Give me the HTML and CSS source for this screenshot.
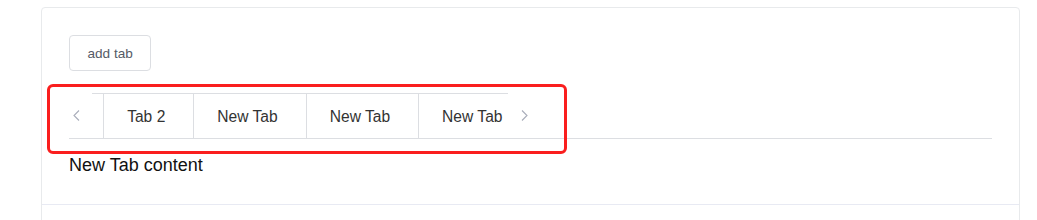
FILE: index.html
```html
<!DOCTYPE html>
<html>
<head>
    <title>Tabs</title>
    <link rel="stylesheet" href="styles.css">
</head>
<body>
<div class="page">
    <div class="card">
        <div class="card-body">
            <button class="btn">add tab</button>

            <div class="tabs-bar">
                <span class="tabs-prev">
                    <svg width="7" height="11" viewBox="0 0 7 11"><polyline points="6,0.5 1,5.5 6,10.5" fill="none" stroke="#a9adba" stroke-width="1.1"/></svg>
                </span>
                <div class="tabs-scroll">
                    <div class="tabs-list">
                        <div class="tab">Tab 1</div>
                        <div class="tab">Tab 2</div>
                        <div class="tab">New Tab</div>
                        <div class="tab">New Tab</div>
                        <div class="tab active">New Tab</div>
                    </div>
                </div>
                <span class="tabs-next">
                    <svg width="7" height="11" viewBox="0 0 7 11"><polyline points="1,0.5 6,5.5 1,10.5" fill="none" stroke="#a9adba" stroke-width="1.1"/></svg>
                </span>
            </div>

            <div class="tab-pane">New Tab content</div>
        </div>
        <div class="card-foot"></div>

        <!-- highlight drawn over the tab bar -->
        <div class="mark"></div>
    </div>
</div>
</body>
</html>
```

FILE: styles.css
```css
/* page */
body {
    margin: 0;
    background: #fff;
    font-family: "Liberation Sans", Arial, sans-serif;
}

.page {
    padding: 7px 17px 0 41px;
}

.card {
    position: relative;
    border: 1px solid #e8eaec;
    border-radius: 4px;
}

.card-body {
    padding: 27px 27px 29px;
}

.card-foot {
    border-top: 1px solid #e8eaf3;
    height: 40px;
}

/* button */
.btn {
    display: block;
    height: 36px;
    padding: 0 17.5px;
    border: 1px solid #dcdee2;
    border-radius: 4px;
    background: #fff;
    color: #555b66;
    font-family: inherit;
    font-size: 13.6px;
    cursor: pointer;
}

/* tabs */
.tabs-bar {
    display: flex;
    margin-top: 22px;
    margin-bottom: 17px;
    border-bottom: 1px solid #dcdee2;
}

.tabs-prev,
.tabs-next {
    display: flex;
    align-items: center;
    height: 45px;
    cursor: pointer;
}

.tabs-prev {
    width: 23px;
    padding-left: 4px;
    box-sizing: border-box;
}

.tabs-next {
    padding-left: 13px;
}

.tabs-scroll {
    width: 416px;
    overflow: hidden;
}

.tabs-list {
    display: flex;
    margin-left: -79px;
}

.tab {
    flex: none;
    height: 44px;
    line-height: 46px;
    padding: 0 28px 0 23px;
    border-top: 1px solid #dcdee2;
    border-left: 1px solid #dcdee2;
    color: #333;
    font-size: 15.6px;
    white-space: nowrap;
    cursor: pointer;
}

.tab-pane {
    font-size: 18px;
    line-height: 19px;
    color: #111;
}

/* red highlight */
.mark {
    position: absolute;
    left: 5px;
    top: 76px;
    width: 520px;
    height: 70px;
    box-sizing: border-box;
    border: 3px solid #fa1e1e;
    border-radius: 6px;
    pointer-events: none;
}
```
